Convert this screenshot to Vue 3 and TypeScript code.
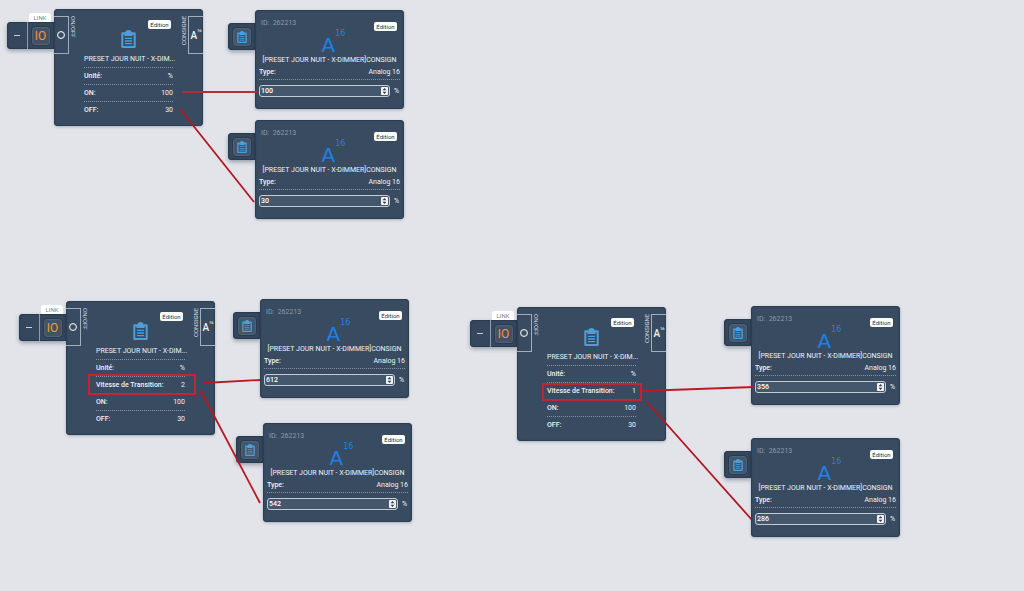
<script setup lang="ts">
import { ref } from 'vue'

interface Row {
  label: string
  value: string
}
interface PresetNode {
  id: string
  x: number
  y: number
  rows: Row[]
}
interface AnalogNode {
  id: string
  x: number
  y: number
  value: string
}
interface Wire {
  x1: number
  y1: number
  x2: number
  y2: number
  color: string
}
interface Mark {
  x: number
  y: number
  w: number
  h: number
}

const presets: PresetNode[] = [
  {
    id: 'p1',
    x: 54,
    y: 9,
    rows: [
      { label: 'Unité:', value: '%' },
      { label: 'ON:', value: '100' },
      { label: 'OFF:', value: '30' },
    ],
  },
  {
    id: 'p2',
    x: 66,
    y: 301,
    rows: [
      { label: 'Unité:', value: '%' },
      { label: 'Vitesse de Transition:', value: '2' },
      { label: 'ON:', value: '100' },
      { label: 'OFF:', value: '30' },
    ],
  },
  {
    id: 'p3',
    x: 517,
    y: 307,
    rows: [
      { label: 'Unité:', value: '%' },
      { label: 'Vitesse de Transition:', value: '1' },
      { label: 'ON:', value: '100' },
      { label: 'OFF:', value: '30' },
    ],
  },
]

const analogs = ref<AnalogNode[]>([
  { id: 'a1', x: 255, y: 10, value: '100' },
  { id: 'a2', x: 255, y: 120, value: '30' },
  { id: 'a3', x: 260, y: 299, value: '612' },
  { id: 'a4', x: 263, y: 423, value: '542' },
  { id: 'a5', x: 751, y: 306, value: '356' },
  { id: 'a6', x: 751, y: 438, value: '286' },
])

const wires: Wire[] = [
  { x1: 182, y1: 92, x2: 257, y2: 92, color: '#b72b39' },
  { x1: 180, y1: 109, x2: 254, y2: 202, color: '#b01822' },
  { x1: 204, y1: 383, x2: 260, y2: 380, color: '#c01420' },
  { x1: 201, y1: 391, x2: 260, y2: 503, color: '#b81822' },
  { x1: 641, y1: 391, x2: 754, y2: 387, color: '#c01828' },
  { x1: 646, y1: 401, x2: 752, y2: 520, color: '#b01822' },
]

const marks: Mark[] = [
  { x: 89, y: 375, w: 106, h: 19 },
  { x: 543, y: 384, w: 98, h: 16 },
]

function place(n: { x: number; y: number }) {
  return { left: `${n.x}px`, top: `${n.y}px` }
}

function step(n: AnalogNode) {
  n.value = String(Number(n.value) + 1)
}
</script>

<template>
  <main class="canvas">
    <svg class="defs" aria-hidden="true">
      <symbol id="clipboard" viewBox="0 0 16 20">
        <path
          fill="currentColor"
          fill-rule="evenodd"
          d="M1.500 2.500h3C5 1 6.200 0 8 0s3 1 3.500 2.500h3c.9 0 1.500.6 1.500 1.500V18.500c0 .9-.6 1.500-1.500 1.500h-13C.6 20 0 19.400 0 18.500V4c0-.9.6-1.500 1.500-1.500zM2.200 5v12.800h11.600V5h-1.300V6.800h-9V5zM4 8.600h8v1.500H4zM4 11.500h8v1.500H4zM4 14.400h8v1.500H4z"
        />
      </symbol>
    </svg>

    <article v-for="p in presets" :key="p.id" class="node" :style="place(p)">
      <div class="linkbar">
        <span class="link-tab">LINK</span>
        <span class="dash-cell"><i class="dash"></i></span>
        <span class="io-cell"><button type="button" class="key io">IO</button></span>
      </div>
      <div class="card preset">
        <div class="port in">
          <span class="port-box"><i class="ring"></i></span>
          <span class="port-name">ON/OFF</span>
        </div>
        <div class="port out">
          <span class="port-name up">CONSIGNE</span>
          <span class="port-box"><span class="glyph">A<sup>16</sup></span></span>
        </div>
        <header class="head">
          <button type="button" class="edit">Édition</button>
        </header>
        <svg class="clip-big"><use href="#clipboard" /></svg>
        <div class="title">PRESET JOUR NUIT - X-DIM...</div>
        <dl class="rows">
          <div v-for="r in p.rows" :key="r.label" class="row">
            <dt>{{ r.label }}</dt>
            <dd>{{ r.value }}</dd>
          </div>
        </dl>
      </div>
    </article>

    <article v-for="a in analogs" :key="a.id" class="node" :style="place(a)">
      <div class="side-tab">
        <button type="button" class="key" aria-label="Preset">
          <svg class="clip-small"><use href="#clipboard" /></svg>
        </button>
      </div>
      <div class="card analog">
        <header class="ahead">
          <span class="ident">ID:&nbsp; 262213</span>
          <button type="button" class="edit">Édition</button>
        </header>
        <div class="big-a">A<sup>16</sup></div>
        <h2 class="aname">[PRESET JOUR NUIT - X-DIMMER]CONSIGN</h2>
        <div class="type"><b>Type:</b><span>Analog 16</span></div>
        <div class="entry">
          <div class="field">
            <input :id="a.id" v-model="a.value" type="text" inputmode="numeric" />
            <button type="button" class="spin" aria-label="+" @click="step(a)">
              <svg viewBox="0 0 7 8"><path d="M3.500 1l2 2.200h-4zM3.500 7l2-2.200h-4z" fill="#35404e" /></svg>
            </button>
          </div>
          <label :for="a.id">%</label>
        </div>
      </div>
    </article>

    <svg class="overlay" aria-hidden="true">
      <line
        v-for="(w, i) in wires"
        :key="i"
        :x1="w.x1"
        :y1="w.y1"
        :x2="w.x2"
        :y2="w.y2"
        :stroke="w.color"
        stroke-width="1.800"
      />
      <rect
        v-for="(m, i) in marks"
        :key="'m' + i"
        :x="m.x"
        :y="m.y"
        :width="m.w"
        :height="m.h"
        fill="none"
        stroke="#d3202e"
        stroke-width="1.800"
      />
    </svg>
  </main>
</template>

<style>
body {
  margin: 0;
  background: #e2e4ea;
}
</style>

<style scoped>
.canvas {
  position: relative;
  min-height: 100vh;
  overflow: hidden;
  background: #e2e4ea;
  color: #f0f3f6;
  font: 7px/10px Roboto, 'Liberation Sans', sans-serif;
}
.canvas * {
  box-sizing: border-box;
}
.defs {
  position: absolute;
  width: 0;
  height: 0;
}
.overlay {
  position: absolute;
  inset: 0;
  width: 100%;
  height: 100%;
  pointer-events: none;
}
button {
  margin: 0;
  padding: 0;
  border: 0;
  font: inherit;
  cursor: pointer;
}
.node {
  position: absolute;
  width: 149px;
}
.card {
  position: relative;
  border-radius: 4px;
  background: #384b61;
  box-shadow: inset 0 0 1px 1px #2b3d52, 0 1px 3px rgba(60, 70, 90, 0.35);
}

/* preset node */
.preset {
  padding: 11px 30px 8px;
}
.head {
  display: flex;
  justify-content: flex-end;
}
.edit {
  width: 23px;
  height: 9px;
  border-radius: 2px;
  background: #fff;
  color: #27313d;
  font-size: 6px;
  line-height: 9px;
  white-space: nowrap;
}
.head .edit {
  margin-right: 2px;
}
.clip-big {
  display: block;
  width: 15px;
  height: 18px;
  margin: 1px auto 0;
  color: #4f9fd6;
}
.title {
  height: 14px;
  margin-top: 5px;
  line-height: 12px;
  white-space: nowrap;
}
.rows {
  margin: 0;
}
.row {
  display: flex;
  justify-content: space-between;
  height: 17px;
  border-top: 1px dotted #8694a5;
  line-height: 16px;
  white-space: nowrap;
}
.row dt {
  font-weight: 500;
}
.row dd {
  margin: 0;
}
.port {
  position: absolute;
  top: 7px;
  display: flex;
}
.in {
  left: 0;
}
.out {
  right: 0;
}
.port-box {
  display: flex;
  align-items: center;
  justify-content: center;
  width: 15px;
  height: 38px;
  border: 1px solid #a3afbc;
}
.in .port-box {
  border-left: 0;
}
.out .port-box {
  border-right: 0;
}
.port-name {
  writing-mode: vertical-rl;
  width: 9px;
  font-size: 6px;
  line-height: 9px;
  color: #d5dce3;
}
.up {
  transform: rotate(180deg);
  text-align: right;
}
.ring {
  width: 8px;
  height: 8px;
  border: 1px solid #eef1f4;
  border-radius: 50%;
  box-shadow: inset 0 0 1px #eef1f4;
}
.glyph {
  display: flex;
  padding-top: 2px;
  font: 500 10px/12px Roboto, sans-serif;
}
.glyph sup {
  margin-top: -3px;
  font-size: 4px;
  line-height: 8px;
}

.linkbar {
  position: absolute;
  top: 13px;
  right: 100%;
  display: flex;
  width: 47px;
  height: 27px;
  border-radius: 4px 0 0 4px;
  background: #34475d;
  box-shadow: inset 0 0 1px 1px #283a4e, 0 2px 4px rgba(60, 70, 90, 0.45);
}
.link-tab {
  position: absolute;
  bottom: 100%;
  left: 22px;
  width: 22px;
  height: 9px;
  border-radius: 3px 3px 0 0;
  background: #fff;
  color: #7b838d;
  font-size: 6px;
  line-height: 9px;
  text-align: center;
}
.dash-cell,
.io-cell {
  display: flex;
  align-items: center;
  justify-content: center;
}
.dash-cell {
  width: 21px;
  border-right: 1px solid #8e9cad;
}
.io-cell {
  width: 25px;
}
.dash {
  width: 6px;
  height: 1px;
  background: #c6ced6;
}
.key {
  display: flex;
  align-items: center;
  justify-content: center;
  width: 20px;
  height: 20px;
  border: 1px solid #2a3a4c;
  border-radius: 4px;
  background: #42566b;
  box-shadow: inset 0 0 1px 1px #50647a;
}
.io {
  background: #45515f;
  color: #ef9a3d;
  font: 12px/12px Roboto, sans-serif;
}

/* analog node */
.side-tab {
  position: absolute;
  top: 13px;
  right: 100%;
  display: flex;
  align-items: center;
  width: 27px;
  height: 27px;
  padding-left: 4px;
  border-radius: 4px 0 0 4px;
  background: #34475d;
  box-shadow: inset 0 0 1px 1px #283a4e, 0 2px 4px rgba(60, 70, 90, 0.45);
}
.clip-small {
  width: 10px;
  height: 12px;
  color: #4f9fd6;
}
.analog {
  padding: 8px 4px 12px;
}
.ahead {
  display: flex;
  justify-content: space-between;
  height: 17px;
  padding: 0 3px 0 2px;
}
.ahead .edit {
  margin-top: 4px;
}
.ident {
  color: #8d9bac;
}
.big-a {
  display: flex;
  justify-content: center;
  height: 20px;
  padding-left: 8px;
  color: #1f80e6;
  font: 20px/20px 'DejaVu Sans', sans-serif;
}
.big-a sup {
  margin-top: -6px;
  font-size: 8px;
  line-height: 10px;
}
.aname {
  margin: 0;
  font: inherit;
  text-align: center;
  white-space: nowrap;
}
.type {
  display: flex;
  justify-content: space-between;
  height: 15px;
  padding-top: 2px;
  border-bottom: 1px dotted #8694a5;
}
.type b {
  font-weight: 500;
}
.entry {
  display: flex;
  align-items: center;
  gap: 4px;
  margin-top: 5px;
}
.field {
  display: flex;
  flex: 1;
  align-items: center;
  height: 12px;
  padding-right: 1px;
  border: 1px solid #c3ccd5;
  border-radius: 3px;
  background: #45576c;
}
.field input {
  flex: 1;
  min-width: 0;
  height: 10px;
  padding: 0 1px;
  border: 0;
  outline: 0;
  background: none;
  color: #fff;
  font: 500 7px/10px Roboto, sans-serif;
}
.spin {
  display: flex;
  width: 7px;
  height: 8px;
  border-radius: 1px;
  background: #f3f5f7;
}
.spin svg {
  width: 7px;
  height: 8px;
}
.entry label {
  width: 6px;
}
</style>
